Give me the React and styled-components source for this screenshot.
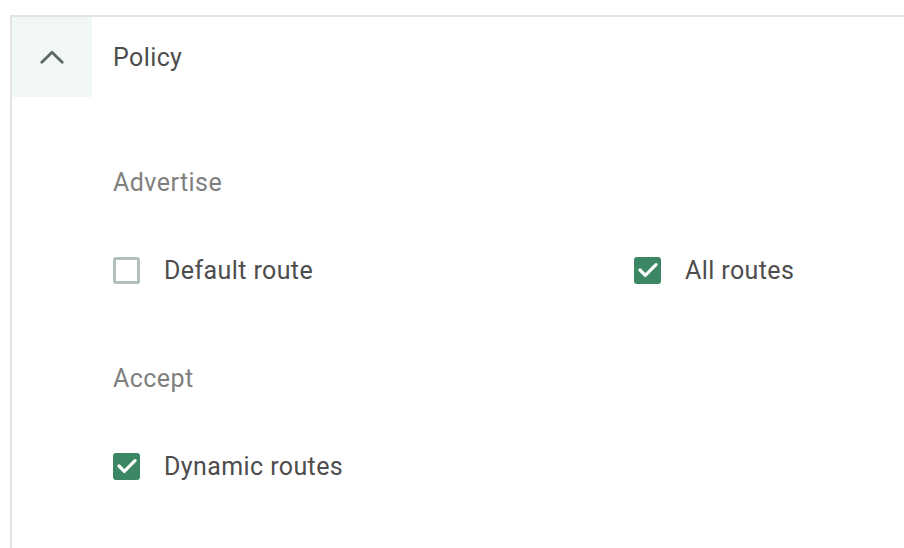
import React, { useState } from 'react';
import styled, { createGlobalStyle } from 'styled-components';

const GlobalStyle = createGlobalStyle`
  html, body {
    margin: 0;
    padding: 0;
    background: #ffffff;
    overflow: hidden;
  }
  body {
    font-family: Roboto, "Liberation Sans", Arial, sans-serif;
  }
`;

const Page = styled.div`
  width: 904px;
  height: 548px;
  overflow: hidden;
  padding: 15px 0 0 10px;
  box-sizing: border-box;
`;

const Card = styled.div`
  width: 1200px;
  min-height: 560px;
  border-top: 2px solid #e4e4e4;
  border-left: 2px solid #e4e4e4;
  background: #fff;
`;

const Header = styled.div`
  display: flex;
  align-items: center;
  height: 80px;
`;

const Toggle = styled.button`
  width: 80px;
  height: 80px;
  border: none;
  padding: 0;
  margin: 0;
  background: #f1f7f5;
  display: flex;
  align-items: center;
  justify-content: center;
  cursor: pointer;
`;

const Title = styled.h2`
  margin: 2px 0 0 21px;
  font-size: 25px;
  letter-spacing: 0.4px;
  font-weight: 400;
  color: #4d4d4d;
  line-height: 28px;
`;

const Body = styled.div`
  padding: 72px 0 0 101px;
`;

const Section = styled.div`
  margin-bottom: 81px;
`;

const SectionLabel = styled.div`
  font-size: 25px;
  letter-spacing: 0.45px;
  line-height: 28px;
  color: #7f7f7f;
  margin-bottom: 59px;
`;

const OptionGrid = styled.div`
  display: grid;
  grid-template-columns: 521px 521px;
`;

const Option = styled.label`
  display: flex;
  align-items: center;
  height: 28px;
  cursor: pointer;
  font-size: 25px;
  letter-spacing: 0.4px;
  color: #4d4d4d;
`;

const Box = styled.span`
  width: 27px;
  height: 27px;
  box-sizing: border-box;
  border-radius: 3px;
  border: 3px solid ${p => (p.$checked ? '#3b8764' : '#b1bfbd')};
  background: ${p => (p.$checked ? '#3b8764' : '#fff')};
  display: flex;
  align-items: center;
  justify-content: center;
  margin-right: 24px;
  flex-shrink: 0;
`;

const Chevron = () => (
  <svg width="24" height="14" viewBox="0 0 24 14" fill="none">
    <path d="M1.8 12.3 L12 2.2 L22.2 12.3" stroke="#5f6766" strokeWidth="2.8" strokeLinecap="round" strokeLinejoin="round" />
  </svg>
);

const Check = () => (
  <svg width="20" height="16" viewBox="0 0 20 16" fill="none">
    <path d="M2 8 L7.3 13.3 L18 2.6" stroke="#ffffff" strokeWidth="3.2" strokeLinecap="round" strokeLinejoin="round" />
  </svg>
);

const Checkbox = ({ label, checked, onToggle }) => (
  <Option onClick={onToggle}>
    <Box $checked={checked}>{checked && <Check />}</Box>
    {label}
  </Option>
);

const App = () => {
  const [open, setOpen] = useState(true);
  const [opts, setOpts] = useState({ defaultRoute: false, allRoutes: true, dynamic: true });

  const toggle = key => setOpts({ ...opts, [key]: !opts[key] });

  return (
    <Page>
      <GlobalStyle />
      <Card>
        <Header>
          <Toggle onClick={() => setOpen(!open)}>
            <Chevron />
          </Toggle>
          <Title>Policy</Title>
        </Header>
        {open && (
          <Body>
            <Section>
              <SectionLabel>Advertise</SectionLabel>
              <OptionGrid>
                <Checkbox label="Default route" checked={opts.defaultRoute} onToggle={() => toggle('defaultRoute')} />
                <Checkbox label="All routes" checked={opts.allRoutes} onToggle={() => toggle('allRoutes')} />
              </OptionGrid>
            </Section>
            <Section>
              <SectionLabel>Accept</SectionLabel>
              <OptionGrid>
                <Checkbox label="Dynamic routes" checked={opts.dynamic} onToggle={() => toggle('dynamic')} />
              </OptionGrid>
            </Section>
          </Body>
        )}
      </Card>
    </Page>
  );
};

export default App;
